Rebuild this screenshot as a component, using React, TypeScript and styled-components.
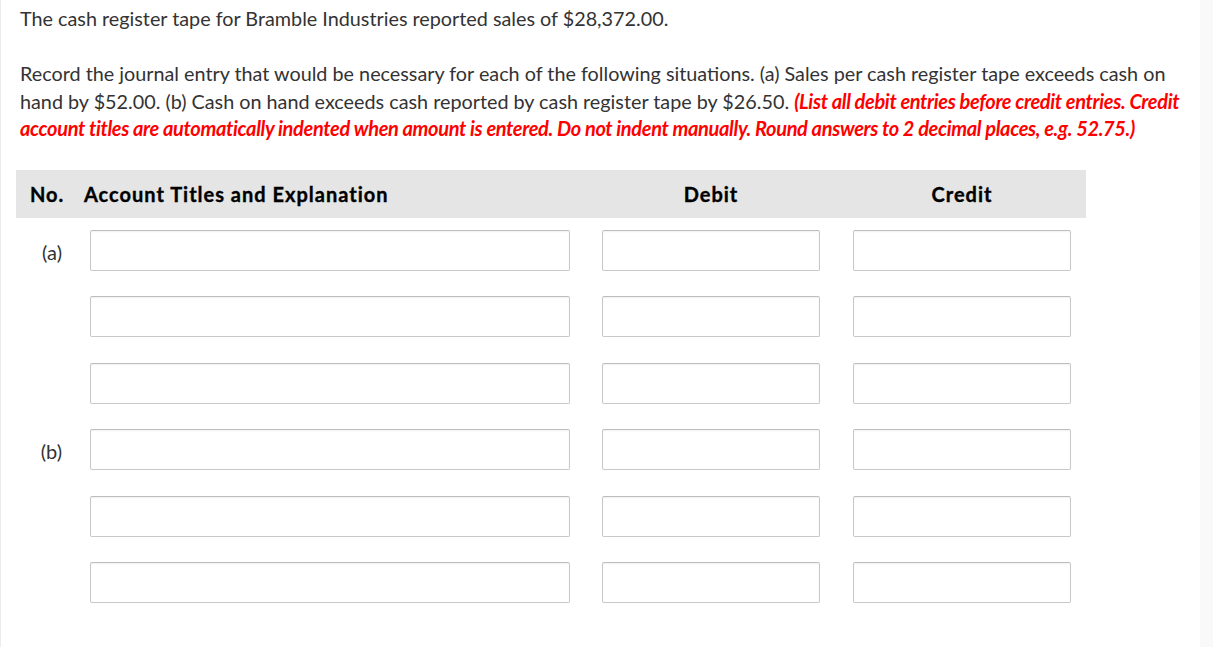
import styled, { createGlobalStyle } from 'styled-components'

const GlobalStyle = createGlobalStyle`
    html, body {
        margin: 0;
        padding: 0;
        background: #f9f9f9;
    }
    body {
        font-family: Lato, "Open Sans", sans-serif;
    }
`;

const Page = styled.div`
    width: 1200px;
    min-height: 647px;
    background: #ffffff;
    border-left: 1px solid #ececec;
    box-sizing: border-box;
    padding: 5px 0 0 19px;
`;

const Paragraph = styled.p`
    margin: 0 0 27.5px;
    font-size: 19.8px;
    line-height: 27.5px;
    color: #333333;
    max-width: 1170px;
`;

const Instruction = styled.em`
    color: #ff0000;
    font-size: 20px;
    font-weight: 700;
    font-style: italic;
    letter-spacing: -0.35px;
`;

const Journal = styled.div`
    margin-left: -4px;
    width: 1070px;
`;

const Grid = styled.div`
    display: grid;
    grid-template-columns: 74px 512px 251px 233px;
    align-items: center;
`;

const HeaderRow = styled(Grid)`
    height: 48px;
    background: #e5e5e5;
    font-size: 20px;
    font-weight: 700;
    letter-spacing: 1px;
    -webkit-text-stroke: 0.35px #000;
    color: #000000;
`;

const HeaderCell = styled.div<{ $width?: number; $shift?: number }>`
    width: ${p => (p.$width ? `${p.$width}px` : 'auto')};
    text-align: ${p => (p.$width ? 'center' : 'left')};
    padding-left: ${p => (p.$shift && p.$shift > 0 ? p.$shift : 0)}px;
    margin-left: ${p => (p.$shift && p.$shift < 0 ? p.$shift : 0)}px;
`;

const Body = styled(Grid)`
    padding-top: 12px;
    row-gap: 25.4px;
`;

const RowLabel = styled.div`
    font-size: 20px;
    color: #333333;
    text-align: right;
    padding-right: 28px;
    padding-top: 2px;
`;

const Field = styled.input<{ $width: number }>`
    box-sizing: border-box;
    width: ${p => p.$width}px;
    height: 41px;
    border: 1px solid #c8c8c8;
    border-top-color: #bdbdbd;
    border-radius: 2px;
    box-shadow: inset 0 1px 2px rgba(0, 0, 0, 0.06);
    background: #ffffff;
    font-family: inherit;
    font-size: 16px;
    padding: 0 8px;
    outline: none;
`;

const rows = ['(a)', '', '', '(b)', '', '']

const App = () => {
    return (
        <>
            <GlobalStyle />
            <Page>
                <Paragraph>The cash register tape for Bramble Industries reported sales of $28,372.00.</Paragraph>
                <Paragraph>
                    Record the journal entry that would be necessary for each of the following situations. (a) Sales per cash register tape exceeds cash on hand by $52.00. (b) Cash on hand exceeds cash reported by cash register tape by $26.50.{' '}
                    <Instruction>(List all debit entries before credit entries. Credit account titles are automatically indented when amount is entered. Do not indent manually. Round answers to 2 decimal places, e.g. 52.75.)</Instruction>
                </Paragraph>

                <Journal>
                    <HeaderRow>
                        <HeaderCell $shift={14}>No.</HeaderCell>
                        <HeaderCell $shift={-6}>Account Titles and Explanation</HeaderCell>
                        <HeaderCell $width={218}>Debit</HeaderCell>
                        <HeaderCell $width={218}>Credit</HeaderCell>
                    </HeaderRow>

                    <Body>
                        {rows.map((label, i) => (
                            <>
                                <RowLabel key={`l${i}`}>{label}</RowLabel>
                                <Field key={`a${i}`} type="text" $width={480} />
                                <Field key={`d${i}`} type="text" $width={218} />
                                <Field key={`c${i}`} type="text" $width={218} />
                            </>
                        ))}
                    </Body>
                </Journal>
            </Page>
        </>
    )
}

export default App
